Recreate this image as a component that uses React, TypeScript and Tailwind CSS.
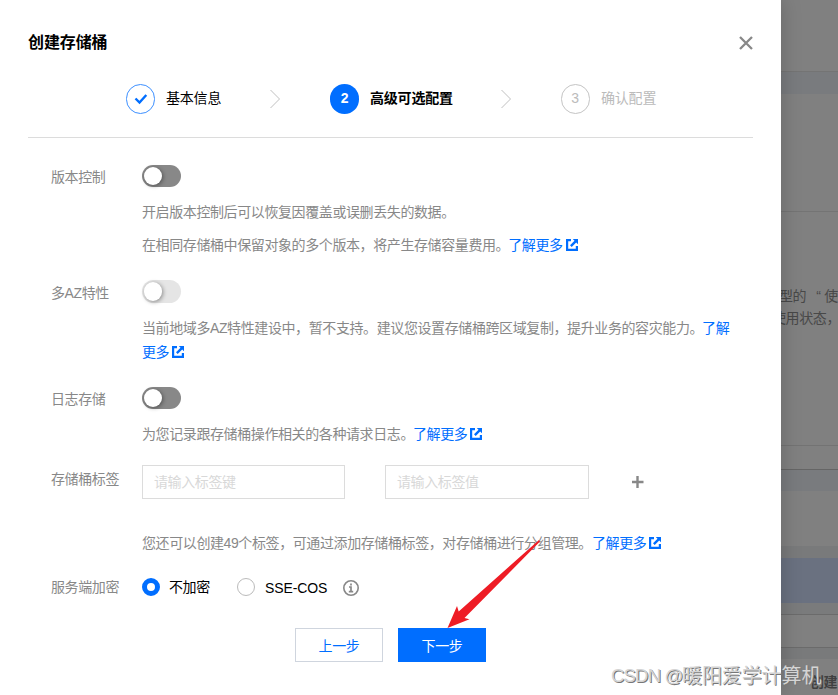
import type { ReactNode } from "react"

function ExternalIcon() {
  return (
    <svg viewBox="0 0 12 12" className="ml-[3px] inline-block h-3 w-3 align-[-1px]" fill="none">
      <path d="M5 1.1H1.1v9.8h9.8V7" stroke="#006eff" strokeWidth="2.2" />
      <path d="M6.8 0H12v5.2L10.2 3.5 5.7 8 4 6.3l4.5-4.5z" fill="#006eff" />
    </svg>
  )
}

function LearnMore({ className = "-ml-px" }: { className?: string }) {
  return (
    <a href="#more" className={`text-[#006eff] ${className}`}>
      了解更多
      <ExternalIcon />
    </a>
  )
}

function Toggle({ disabled = false }: { disabled?: boolean }) {
  return (
    <button
      type="button"
      disabled={disabled}
      className={`flex w-[39px] shrink-0 items-center rounded-full pl-[1.5px] ${disabled ? "h-[23px] bg-[#e5e5e5]" : "h-[22px] bg-[#888]"}`}
    >
      <span className="h-[18.5px] w-[18.5px] rounded-full bg-white shadow-[1px_1px_4px_rgba(0,0,0,0.4)]" />
    </button>
  )
}

function FormRow({ label, className, labelClass, children }: { label: string; className: string; labelClass: string; children: ReactNode }) {
  return (
    <div className={`flex ${className}`}>
      <div className={`w-[91px] shrink-0 leading-6 ${labelClass}`}>{label}</div>
      <div className="min-w-0 flex-1">{children}</div>
    </div>
  )
}

function StepArrow() {
  return (
    <svg viewBox="0 0 11 20" className="h-5 w-[11px] shrink-0" fill="none">
      <path d="M.5 1l9 9-9 9" stroke="#c0c0c0" />
    </svg>
  )
}

function Steps() {
  return (
    <div className="flex h-[30px] items-center pl-[98px] tracking-[-0.2px]">
      <div className="flex h-[30px] w-[144px] items-center">
        <span className="flex h-[30px] w-[29px] items-center justify-center rounded-full border border-[#3d90ff]">
          <svg viewBox="0 0 14 12" className="h-3 w-[14px]" fill="none">
            <path d="M1.5 5.5l4 4L12.3 2" stroke="#006eff" strokeWidth="2.4" />
          </svg>
        </span>
        <span className="mb-[2px] ml-[11px] text-black">基本信息</span>
      </div>
      <StepArrow />
      <div className="ml-[49px] flex w-[171px] items-center">
        <span className="flex h-[30px] w-[29px] items-center justify-center rounded-full bg-[#006eff] pb-px text-[14px] font-bold text-white">2</span>
        <span className="mb-[2px] ml-[11px] font-bold text-black">高级可选配置</span>
      </div>
      <StepArrow />
      <div className="ml-[49px] flex items-center text-[#bbb]">
        <span className="flex h-[30px] w-[29px] items-center justify-center rounded-full border border-[#c4c4c4] pr-px pb-px">3</span>
        <span className="mb-[2px] ml-[11px]">确认配置</span>
      </div>
    </div>
  )
}

function Backdrop() {
  return (
    <div className="flex w-[57px] shrink-0 flex-col overflow-hidden bg-[#808080] whitespace-nowrap text-[#484848]">
      <div className="h-[72px] shrink-0 border-b border-[#747474]" />
      <div className="h-[22px] shrink-0 bg-[#797b7e]" />
      <div className="h-[118px] shrink-0 border-b border-[#747474]" />
      <div className="h-[234px] shrink-0 border-b border-[#747474] pt-[73px] leading-[22px]">
        <div className="-ml-[2px] flex">
          <span>型的</span>
          <span className="ml-[10px] w-[8px]">“</span>
          <span>使</span>
        </div>
        <div className="-ml-[9px]">使用状态，</div>
      </div>
      <div className="h-6 shrink-0 border-b border-[#656565] shadow-[0_2px_3px_rgba(0,0,0,0.15)]" />
      <div className="h-[21px] shrink-0 bg-[#797b7e]" />
      <div className="h-[55px] shrink-0" />
      <div className="h-3 shrink-0 bg-[#797a7b]" />
      <div className="h-[45px] shrink-0 bg-[#6a7180]" />
      <div className="h-3 shrink-0 border-b border-[#6b6b6b] bg-[#7a7b7c]" />
      <div className="h-[33px] shrink-0 border-b border-[#6b6b6b]" />
      <div className="h-[11px] shrink-0 bg-[#797a7b]" />
      <div className="h-9 shrink-0 pt-[11px] pl-[29px] font-bold leading-6 text-[#404040]">创建</div>
    </div>
  )
}

export default function App() {
  return (
    <div className="relative flex h-[695px] w-[838px] overflow-hidden bg-white font-['Liberation_Sans','Noto_Sans_CJK_SC',sans-serif] text-[14px] tracking-[-0.4px] text-[#888]">
      <div className="relative z-10 h-[695px] w-[781px] shrink-0 bg-white shadow-[0_0_20px_rgba(0,0,0,0.2)]">
        <div className="mx-7 h-[138px] border-b border-[#dcdcdc]">
          <div className="flex h-[84px] items-center justify-between">
            <h1 className="mt-[2px] text-[16px] font-bold tracking-[-0.1px] text-black">创建存储桶</h1>
            <svg viewBox="0 0 14 14" className="mt-[2px] h-[14px] w-[14px]" fill="none">
              <path d="M1 1l12 12M13 1L1 13" stroke="#888" strokeWidth="2.3" />
            </svg>
          </div>
          <Steps />
        </div>

        <div className="pt-[27px] pr-[46px] pl-[51px]">
          <FormRow label="版本控制" className="h-[115px]" labelClass="">
            <Toggle />
            <p className="mt-[13px] leading-6">开启版本控制后可以恢复因覆盖或误删丢失的数据。</p>
            <p className="mt-[9px] leading-6">
              在相同存储桶中保留对象的多个版本，将产生存储容量费用。<LearnMore />
            </p>
          </FormRow>
          <FormRow label="多AZ特性" className="h-[107px]" labelClass="pt-px">
            <Toggle disabled />
            <p className="mt-[13px] leading-6">
              当前地域多AZ特性建设中，暂不支持。建议您设置存储桶跨区域复制，提升业务的容灾能力。<LearnMore />
            </p>
          </FormRow>
          <FormRow label="日志存储" className="h-[78px]" labelClass="">
            <Toggle />
            <p className="mt-[13px] leading-6">
              为您记录跟存储桶操作相关的各种请求日志。<LearnMore />
            </p>
          </FormRow>
          <FormRow label="存储桶标签" className="h-[110px]" labelClass="pt-[2px]">
            <div className="flex items-center">
              <input placeholder="请输入标签键" className="h-[34px] w-[203px] border border-[#dcdcdc] px-[11px] tracking-[-0.4px] placeholder:text-[#d8d8d8]" />
              <input placeholder="请输入标签值" className="ml-10 h-[34px] w-[204px] border border-[#dcdcdc] px-[11px] tracking-[-0.4px] placeholder:text-[#d8d8d8]" />
              <svg viewBox="0 0 12 12" className="ml-[43px] h-3 w-3" fill="none">
                <path d="M5.5 0v12M0 6h11.5" stroke="#888" strokeWidth="2.4" />
              </svg>
            </div>
            <p className="mt-8 leading-6">
              您还可以创建49个标签，可通过添加存储桶标签，对存储桶进行分组管理。<LearnMore className="ml-0" />
            </p>
          </FormRow>
          <FormRow label="服务端加密" className="h-[53px]" labelClass="">
            <div className="flex h-6 items-center text-black">
              <span className="h-[18px] w-[18px] rounded-full border-[5px] border-[#006eff]" />
              <span className="mt-px ml-[9px] w-[68px]">不加密</span>
              <span className="h-[18px] w-[18px] rounded-full border border-[#bbb]" />
              <span className="mt-[2px] ml-[10px] w-[78px] tracking-[-0.1px]">SSE-COS</span>
              <svg viewBox="0 0 16 16" className="mt-[2px] h-4 w-4" fill="none" stroke="#888">
                <circle cx="8" cy="8" r="7.2" strokeWidth="1.6" />
                <path d="M8 3.5v2M6 7h2v4.5M5.8 11.7h4.4" strokeWidth="1.7" />
              </svg>
            </div>
          </FormRow>
        </div>

        <div className="flex justify-center gap-[15px]">
          <button type="button" className="h-[34px] w-[88px] border border-[#cfd5de] pt-[2px] text-[#006eff]">
            上一步
          </button>
          <button type="button" className="h-[34px] w-[88px] bg-[#006eff] pt-[2px] text-white">下一步</button>
        </div>
      </div>

      <Backdrop />

      {/* pointer to the next step button */}
      <svg viewBox="0 0 100 95" className="pointer-events-none absolute top-[537px] left-[443px] z-20 h-[95px] w-[100px]">
        <path d="M4.5 91L14 69l1.7 5.5L96 3 97 4.5 21.5 81l5 1.3z" fill="#ee1c25" />
      </svg>

      <div className="absolute top-[662px] left-[611px] z-20 flex items-center text-[20px] leading-7 tracking-[-0.1px] whitespace-nowrap text-[#d4d4d4] [text-shadow:1px_1px_0_#777]">
        <span className="w-[71px] text-[18.5px] tracking-[-0.8px]">CSDN @</span>
        <span>暖阳爱学计算机</span>
      </div>
    </div>
  )
}
